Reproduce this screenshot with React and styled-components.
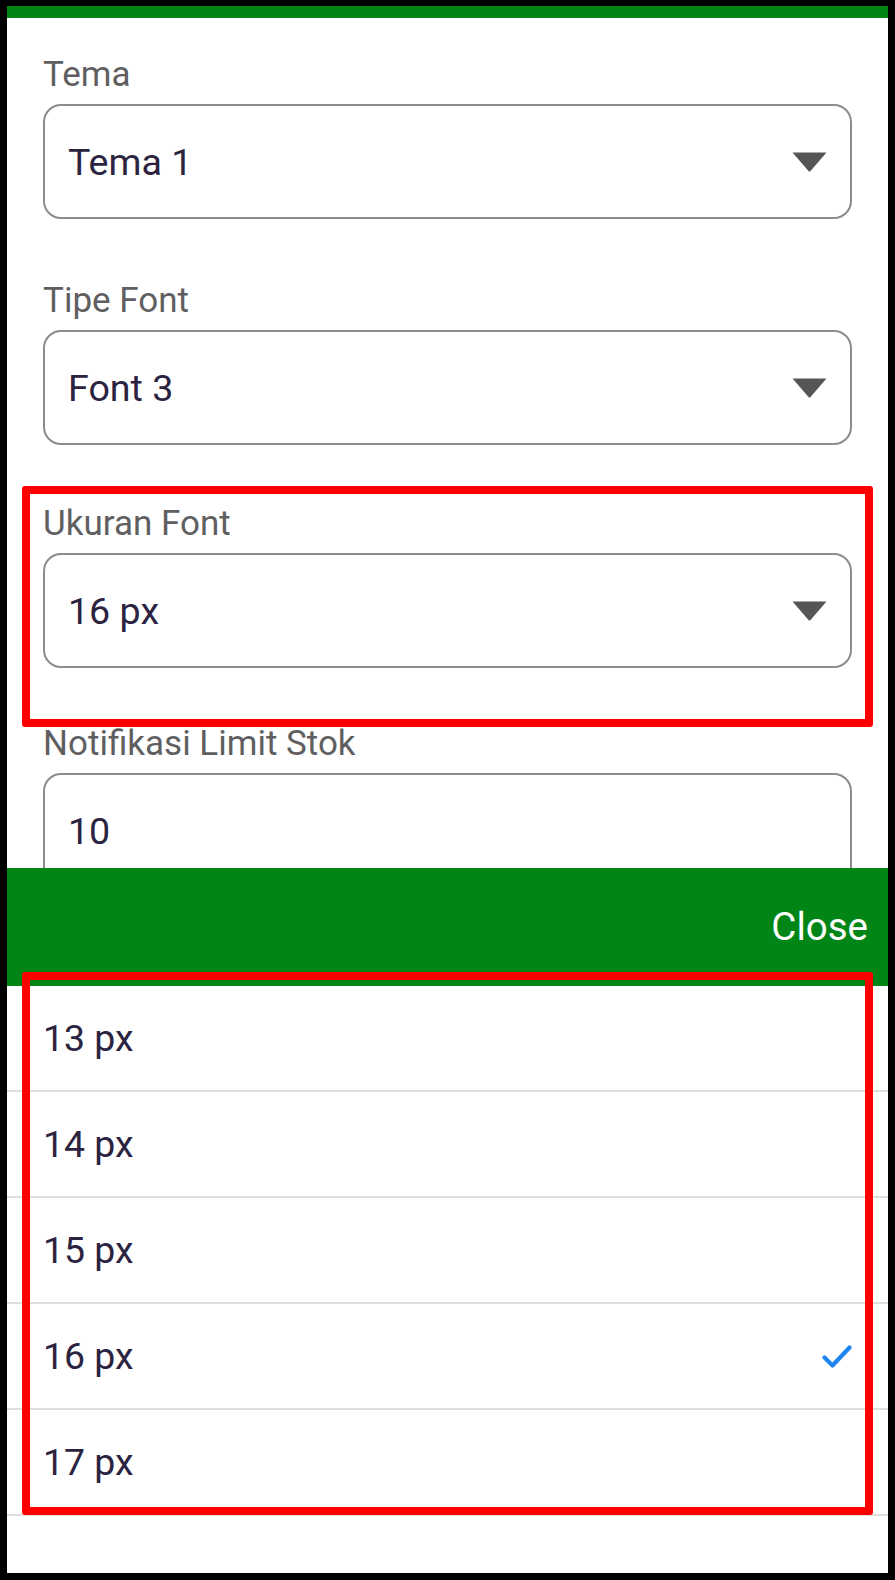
import React from 'react';
import styled, { createGlobalStyle } from 'styled-components';

const GlobalStyle = createGlobalStyle`
  html, body {
    margin: 0;
    padding: 0;
    background: #ffffff;
  }
  * {
    box-sizing: border-box;
  }
`;

const Frame = styled.div`
  position: relative;
  width: 895px;
  height: 1580px;
  border: 7px solid #000000;
  border-top-width: 6px;
  background: #ffffff;
  display: flex;
  flex-direction: column;
  overflow: hidden;
  font-family: Roboto, 'Noto Sans', sans-serif;
`;

const TopBar = styled.div`
  height: 12px;
  flex-shrink: 0;
  background: #028517;
`;

const Form = styled.div`
  height: 850px;
  flex-shrink: 0;
  overflow: hidden;
  padding: 37px 36px 0;
  display: flex;
  flex-direction: column;
`;

const Field = styled.div`
  display: flex;
  flex-direction: column;
  gap: 10px;
  margin-bottom: ${(p) => p.$space || 0}px;
`;

const Label = styled.div`
  font-size: 35px;
  line-height: 39px;
  color: #5f5f61;
`;

const Box = styled.div`
  height: 115px;
  flex-shrink: 0;
  border: 2px solid #8c8c8c;
  border-radius: 18px;
  padding: 0 23px;
  display: flex;
  align-items: center;
  justify-content: space-between;
`;

const Value = styled.span`
  font-size: 37.6px;
  line-height: 44px;
  color: #2b2340;
`;

const Arrow = () => (
  <svg width="35" height="20" viewBox="0 0 35 20">
    <path d="M0.5 0.5 H34.5 L18.5 19 Q17.5 20 16.5 19 Z" fill="#555555" />
  </svg>
);

const Sheet = styled.div`
  flex: 1;
  display: flex;
  flex-direction: column;
`;

const SheetBar = styled.div`
  height: 118px;
  background: #028517;
  display: flex;
  align-items: center;
  justify-content: flex-end;
  padding-right: 20px;
`;

const CloseButton = styled.span`
  font-size: 38.5px;
  line-height: 44px;
  color: #ffffff;
`;

const Option = styled.div`
  height: 106px;
  border-bottom: 2px solid #dedede;
  padding: 0 36px;
  display: flex;
  align-items: center;
  justify-content: space-between;
`;

const OptionText = styled.span`
  font-size: 37.4px;
  line-height: 44px;
  color: #2b2340;
`;

const Check = () => (
  <svg width="30" height="23" viewBox="0 0 30 23">
    <path
      d="M2.5 12.5 L10.5 20.5 L27.5 2.5"
      fill="none"
      stroke="#1f86ef"
      strokeWidth="4.2"
      strokeLinecap="round"
      strokeLinejoin="round"
    />
  </svg>
);

const Highlight = styled.div`
  position: absolute;
  left: ${(p) => p.$left}px;
  top: ${(p) => p.$top}px;
  width: ${(p) => p.$width}px;
  height: ${(p) => p.$height}px;
  border: 8.5px solid #ff0000;
  border-radius: 3px;
  pointer-events: none;
`;

const fields = [
  { label: 'Tema', value: 'Tema 1', select: true, space: 62 },
  { label: 'Tipe Font', value: 'Font 3', select: true, space: 59 },
  { label: 'Ukuran Font', value: '16 px', select: true, space: 56 },
  { label: 'Notifikasi Limit Stok', value: '10', select: false, space: 0 },
];

const sizes = ['13 px', '14 px', '15 px', '16 px', '17 px'];
const selected = '16 px';

const App = () => (
  <>
    <GlobalStyle />
    <Frame>
      <TopBar />
      <Form>
        {fields.map((f) => (
          <Field key={f.label} $space={f.space}>
            <Label>{f.label}</Label>
            <Box>
              <Value>{f.value}</Value>
              {f.select && <Arrow />}
            </Box>
          </Field>
        ))}
      </Form>
      <Sheet>
        <SheetBar>
          <CloseButton>Close</CloseButton>
        </SheetBar>
        {sizes.map((s) => (
          <Option key={s}>
            <OptionText>{s}</OptionText>
            {s === selected && <Check />}
          </Option>
        ))}
      </Sheet>
      <Highlight $left={15} $top={480} $width={851} $height={241} />
      <Highlight $left={15} $top={966} $width={851} $height={543} />
    </Frame>
  </>
);

export default App;
